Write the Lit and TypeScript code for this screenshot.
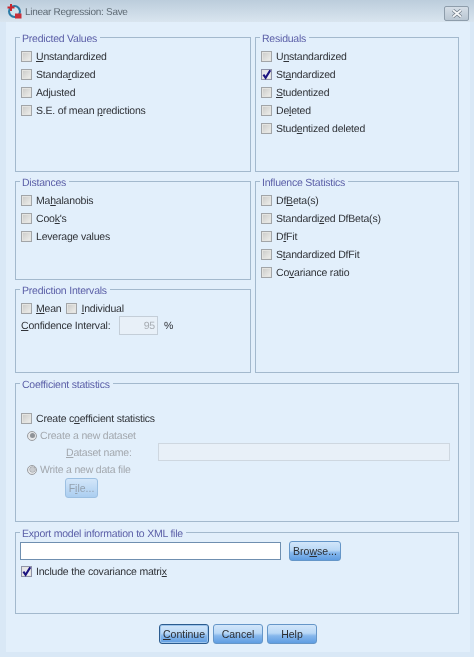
import { LitElement, html, css, svg } from "lit";
import { customElement } from "lit/decorators.js";

const m = (s: string) => {
  const i = s.indexOf("_");
  if (i < 0) return html`${s}`;
  return html`${s.slice(0, i)}<u>${s[i + 1]}</u>${s.slice(i + 2)}`;
};

const tick = svg`<svg class="tick" viewBox="0 0 11 11" width="11" height="11"><path d="M2.4 5.6 L4.6 8.8 L9.3 1.2" fill="none" stroke="#1c1580" stroke-width="2.1"/></svg>`;

const check = (label: string, on = false) => html`<label class="row">
  <span class="box ${on ? "on" : ""}">${on ? tick : ""}</span><span class="t">${m(label)}</span>
</label>`;

const group = (title: string, cls: string, body: unknown) => html`<section class="group ${cls}">
  <h3 class="legend">${title}</h3>
  ${body}
</section>`;

@customElement("app-root")
export class AppRoot extends LitElement {
  static styles = css`
    :host {
      display: block;
      width: 474px;
      height: 657px;
      overflow: hidden;
      font-family: "Liberation Sans", Arial, sans-serif;
      font-size: 10.5px;
      letter-spacing: -0.2px;
      text-rendering: geometricPrecision;
      color: #303338;
    }
    .window {
      height: 657px;
      box-sizing: border-box;
      background: #d9e8f6;
      display: flex;
      flex-direction: column;
      filter: blur(0.3px);
    }
    .titlebar {
      height: 22px;
      flex: none;
      background: linear-gradient(#bccddc, #d9e5ef);
      display: flex;
      align-items: center;
      padding: 0 5px 0 7px;
      gap: 3px;
    }
    .title {
      flex: 1;
      font-size: 10px;
      letter-spacing: -0.3px;
      color: #5f6b75;
      padding-top: 3px;
    }
    .close {
      width: 25px;
      height: 15px;
      box-sizing: border-box;
      margin-top: 4px;
      border: 1px solid #8e9dab;
      border-radius: 2px;
      background: linear-gradient(#d5dee7, #b9c6d2);
      display: flex;
      align-items: center;
      justify-content: center;
    }
    .panel {
      flex: 1;
      margin: 0 4px 5px 6px;
      background: #e2effb;
      padding: 15px 11px 0 9px;
      display: flex;
      flex-direction: column;
    }
    .columns {
      display: grid;
      grid-template-columns: 236px 204px;
      gap: 4px;
    }
    .col {
      display: flex;
      flex-direction: column;
      gap: 9px;
    }
    .group {
      position: relative;
      box-sizing: border-box;
      border: 1px solid #a3b9cd;
      padding: 9px 4px 0 5px;
    }
    .legend {
      position: absolute;
      top: -5px;
      left: 4px;
      margin: 0;
      padding: 0 3px 0 2px;
      background: #e2effb;
      font-weight: normal;
      font-size: 10.5px;
      letter-spacing: -0.22px;
      line-height: 13px;
      color: #5c60a8;
    }
    .h135 { height: 135px; }
    .h99 { height: 99px; }
    .h84 { height: 84px; }
    .h192 { height: 192px; }
    .coef { height: 139px; margin-top: 10px; padding-top: 25px; }
    .xml { height: 82px; margin-top: 10px; padding-top: 8px; padding-left: 4px; }
    .row {
      display: flex;
      align-items: center;
      gap: 4px;
      height: 18px;
      line-height: 18px;
      white-space: nowrap;
    }
    .t { padding-top: 1px; }
    .box {
      width: 11px;
      height: 11px;
      box-sizing: border-box;
      flex: none;
      border: 1px solid #a2a5a8;
      background: linear-gradient(135deg, #c9c9c7, #f0f0ed);
      box-shadow: inset 0 0 0 1px #e4e4e1;
      position: relative;
    }
    .box.on { background: linear-gradient(135deg, #dcdde6, #f6f6f8); border-color: #8f93a8; }
    .tick { position: absolute; left: -1px; top: -1px; }
    u { text-underline-offset: 1px; }
    .inline { display: flex; gap: 5px; height: 18px; }
    .conf {
      display: flex;
      align-items: center;
      height: 19px;
      margin-top: -1px;
    }
    .conf .lbl { width: 98px; }
    .num {
      box-sizing: border-box;
      width: 39px;
      height: 19px;
      border: 1px solid #c4ced8;
      background: #e8f0f8;
      color: #a8adb3;
      text-align: right;
      padding-right: 2px;
      line-height: 18px;
    }
    .pct { margin-left: 6px; }
    .radio {
      display: flex;
      align-items: center;
      gap: 3px;
      height: 17px;
      padding-left: 6px;
      color: #a3a8ae;
      white-space: nowrap;
    }
    .dot {
      width: 10px;
      height: 10px;
      box-sizing: border-box;
      border-radius: 50%;
      border: 1px solid #9a9da1;
      background: #e6e8ea;
      display: flex;
      align-items: center;
      justify-content: center;
      flex: none;
    }
    .dot::after {
      content: "";
      width: 5px;
      height: 5px;
      border-radius: 50%;
      background: #8f9398;
    }
    .dot.off::after { background: #c9ccd0; box-shadow: 0 0 0 0.5px #9a9da1; }
    .dsrow {
      display: flex;
      align-items: center;
      height: 18px;
      color: #a3a8ae;
      padding-left: 45px;
      margin-top: -1px;
    }
    .dsrow .lbl { width: 92px; }
    .dsinput {
      box-sizing: border-box;
      width: 292px;
      height: 18px;
      border: 1px solid #ced7e0;
      background: #e8f0f8;
    }
    .btn {
      box-sizing: border-box;
      height: 20px;
      border: 1px solid #6596c8;
      border-radius: 3px;
      background: linear-gradient(#d2e6fa 0%, #b9d8f6 45%, #86b7ec 60%, #5f9de2 100%);
      color: #2b2e33;
      display: flex;
      align-items: center;
      justify-content: center;
      font-size: 10.5px;
      letter-spacing: 0;
      line-height: 1;
      padding: 0;
      font-family: inherit;
    }
    .file {
      width: 33px;
      margin: 0 0 0 44px;
      background: linear-gradient(#d3e6f9, #abcef0);
      border-color: #9cc0e2;
      color: #93a1af;
    }
    .xmlrow { display: flex; align-items: center; gap: 8px; height: 20px; }
    .xmlinput {
      box-sizing: border-box;
      width: 261px;
      height: 18px;
      border: 1px solid #6f8fb0;
      background: #fff;
    }
    .browse { width: 52px; }
    .xml .row { margin-top: 1px; padding-left: 1px; }
    .actions {
      display: flex;
      gap: 4px;
      margin-top: 10px;
      padding-left: 144px;
    }
    .actions .btn { width: 50px; }
    .actions .btn.default {
      border: 1px solid #2c5c8f;
      box-shadow: inset 0 0 0 1px #9cc4ec;
    }
  `;

  render() {
    return html`<div class="window">
      <header class="titlebar">
        <svg width="15" height="16" viewBox="0 0 15 16" aria-hidden="true">
          <circle cx="7.5" cy="8.5" r="6.5" fill="#2a7aa6"/>
          <circle cx="7.5" cy="8.5" r="4.4" fill="#cfe3ee"/>
          <path d="M0.5 4.5h7M4 1v7" stroke="#c8252e" stroke-width="2"/>
          <rect x="8" y="10.5" width="6.5" height="5" fill="#c8303a"/>
        </svg>
        <span class="title">Linear Regression: Save</span>
        <span class="close">
          <svg width="12" height="9" viewBox="0 0 12 9" aria-hidden="true">
            <path d="M2 1.2 L10 7.8 M10 1.2 L2 7.8" stroke="#6f7b87" stroke-width="3.2"/>
            <path d="M2 1.2 L10 7.8 M10 1.2 L2 7.8" stroke="#f4f6f8" stroke-width="1.8"/>
          </svg>
        </span>
      </header>
      <main class="panel">
        <div class="columns">
          <div class="col">
            ${group("Predicted Values", "h135", html`
              ${check("_Unstandardized")}
              ${check("Standa_rdized")}
              ${check("Ad_justed")}
              ${check("S.E. of mean _predictions")}
            `)}
            ${group("Distances", "h99", html`
              ${check("Ma_halanobis")}
              ${check("Coo_k's")}
              ${check("Levera_ge values")}
            `)}
            ${group("Prediction Intervals", "h84", html`
              <div class="inline">
                ${check("_Mean")}
                ${check("_Individual")}
              </div>
              <div class="conf">
                <span class="lbl t">${m("_Confidence Interval:")}</span>
                <span class="num">95</span>
                <span class="pct">%</span>
              </div>
            `)}
          </div>
          <div class="col">
            ${group("Residuals", "h135", html`
              ${check("U_nstandardized")}
              ${check("St_andardized", true)}
              ${check("_Studentized")}
              ${check("De_leted")}
              ${check("Stud_entized deleted")}
            `)}
            ${group("Influence Statistics", "h192", html`
              ${check("Df_Beta(s)")}
              ${check("Standardi_zed DfBeta(s)")}
              ${check("D_fFit")}
              ${check("S_tandardized DfFit")}
              ${check("Co_variance ratio")}
            `)}
          </div>
        </div>
        ${group("Coefficient statistics", "coef", html`
          ${check("Create c_oefficient statistics")}
          <div class="radio"><span class="dot"></span><span class="t">Create a new dataset</span></div>
          <div class="dsrow">
            <span class="lbl t">${m("_Dataset name:")}</span>
            <span class="dsinput"></span>
          </div>
          <div class="radio"><span class="dot off"></span><span class="t">Write a new data file</span></div>
          <button class="btn file" disabled>F<u>i</u>le...</button>
        `)}
        ${group("Export model information to XML file", "xml", html`
          <div class="xmlrow">
            <span class="xmlinput"></span>
            <button class="btn browse">Bro<u>w</u>se...</button>
          </div>
          ${check("Include the covariance matri_x", true)}
        `)}
        <div class="actions">
          <button class="btn default"><u>C</u>ontinue</button>
          <button class="btn">Cancel</button>
          <button class="btn">Help</button>
        </div>
      </main>
    </div>`;
  }
}
